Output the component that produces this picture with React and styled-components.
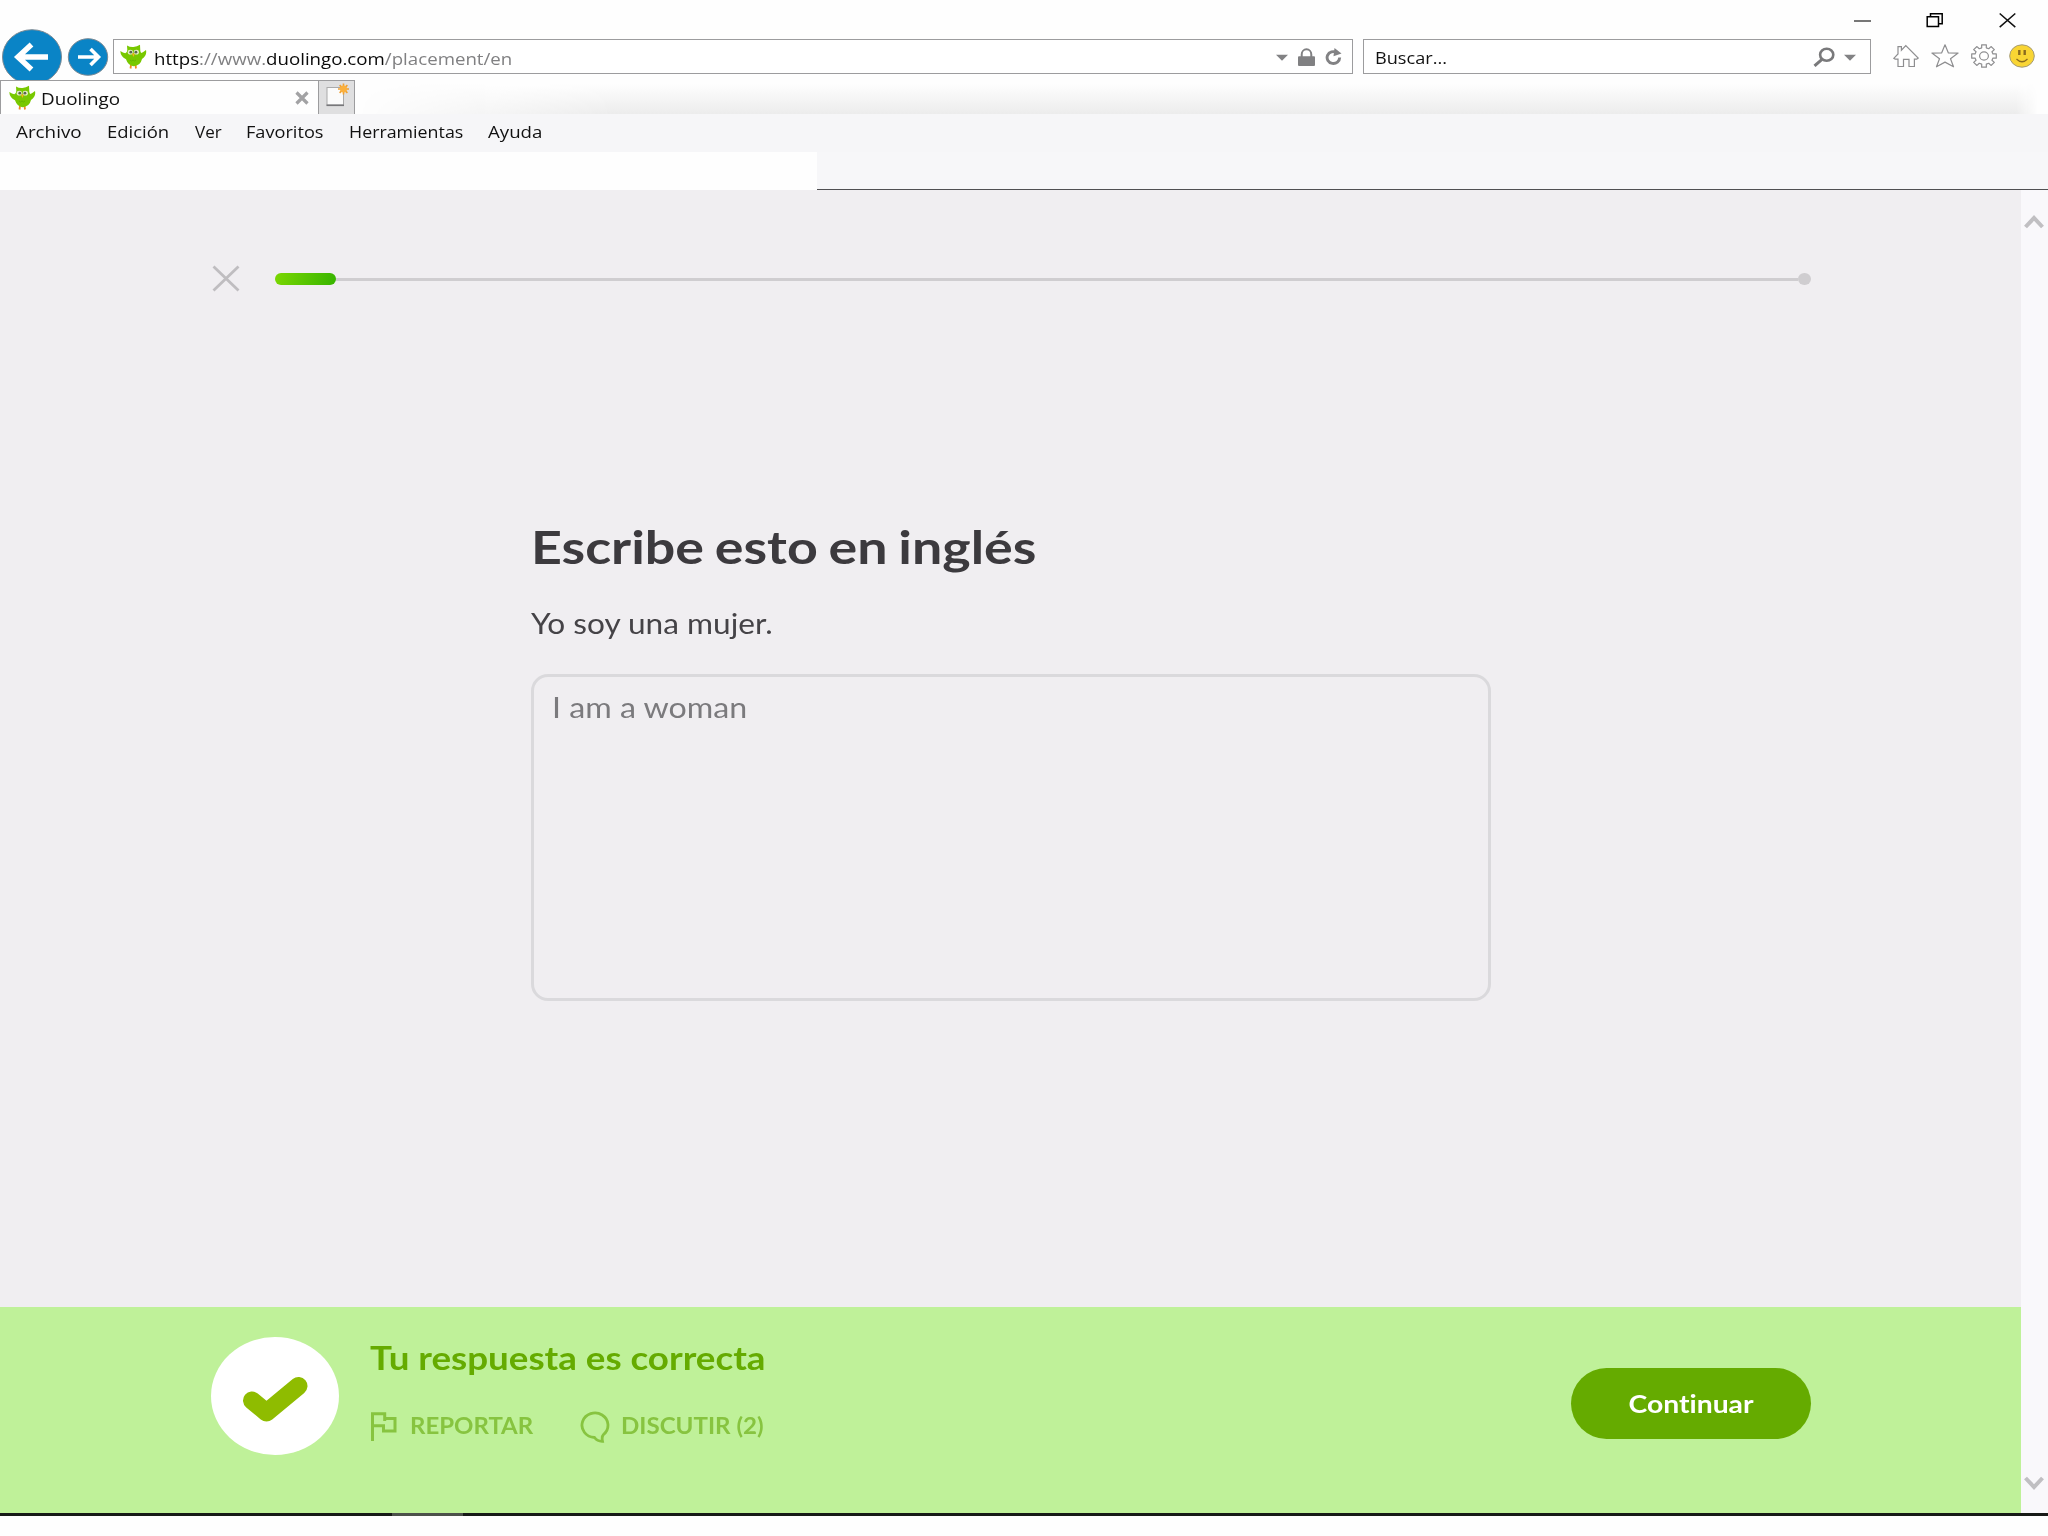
import React from "react";
import styled, { createGlobalStyle } from "styled-components";

const GlobalStyle = createGlobalStyle`
  * { box-sizing: border-box; }
  body { margin: 0; background: #fefefe; overflow: hidden; }
  svg { display: block; flex: none; }
`;

const Screen = styled.div`
  display: flex;
  flex-direction: column;
  width: 2048px;
  height: 1536px;
  background: #fefefe;
  font-family: "Open Sans", "Noto Sans", sans-serif;
  font-size: 16.5px;
  font-variant-ligatures: none;
  color: #111;
`;

/* Text widened horizontally by a ratio, anchored on its left edge. */
const Wide = styled.span`
  display: inline-block;
  white-space: pre;
  transform: scaleX(${(p) => p.$x});
  transform-origin: ${(p) => p.$origin || "left"} center;
`;

/* ---------- Browser chrome ---------- */
const TitleBar = styled.div`
  display: flex;
  justify-content: flex-end;
  align-items: flex-start;
  gap: 55px;
  height: 29px;
  padding: 12px 32px 0 0;
`;

const NavRow = styled.div`
  display: flex;
  align-items: flex-start;
  height: 51px;
  padding-left: 1px;
`;

const NavButton = styled.button`
  border: 0;
  padding: 0;
  background: none;
  margin-right: ${(p) => p.$gap}px;
`;

const Field = styled.div`
  display: flex;
  align-items: center;
  width: ${(p) => p.$width}px;
  height: 35px;
  margin: 10.4px 10px 0 0;
  padding: 1px 9px 0 ${(p) => p.$pad}px;
  border: 1.4px solid #9c9c9e;
  background: #fff;
`;

const Url = styled(Wide)`
  margin-left: 7px;
  padding-top: 2px;
  color: #808082;
  b { font-weight: 400; color: #0a0a0a; }
`;

const SearchHint = styled(Wide)`
  padding-top: 1px;
`;

const FieldIcons = styled.div`
  display: flex;
  align-items: center;
  gap: ${(p) => p.$gap}px;
  margin-left: auto;
  margin-right: ${(p) => p.$end || 0}px;
`;

const Commands = styled.div`
  display: flex;
  gap: 12px;
  padding: 15px 0 0 12px;
`;

const TabRow = styled.div`
  display: flex;
  height: 34px;
`;

const Tab = styled.div`
  display: flex;
  align-items: center;
  width: 318px;
  padding: 0 9px 0 7px;
  border: 1.4px solid #9c9c9e;
  border-bottom: 0;
  border-right: 0;
  background: #fefefe;
`;

const TabTitle = styled(Wide)`
  margin-left: 5px;
  padding-top: 2px;
`;

const TabClose = styled.button`
  margin-left: auto;
  padding: 0;
  border: 0;
  background: none;
`;

const NewTab = styled.button`
  width: 37px;
  padding: 0 0 3px 7px;
  border: 1.4px solid #9c9c9e;
  border-bottom: 0;
  background: #dfdfe0;
`;

const TabShade = styled.div`
  flex: 1;
  margin: 4px 10px 0 0;
  background: linear-gradient(#fefefe, #ececec);
  mask-image: linear-gradient(90deg, transparent, #000 260px, #000 calc(100% - 22px), transparent);
`;

const MenuBar = styled.nav`
  display: grid;
  grid-template-columns: 91.5px 87.5px 51.5px 102.5px 139px 60px;
  align-items: center;
  height: 38px;
  padding: 0 0 4px 15.5px;
  background: #f6f6f8;
`;

const ToolStrip = styled.div`
  display: flex;
  height: 38px;
`;

const ToolBlank = styled.div`
  width: 817px;
`;

const ToolRest = styled.div`
  flex: 1;
  background: #f7f7f9;
  border-bottom: 1.6px solid #505052;
`;

/* ---------- Page ---------- */
const Viewport = styled.div`
  display: flex;
  height: 1323px;
  font-family: Lato, "Open Sans", sans-serif;
`;

const Page = styled.main`
  display: flex;
  flex-direction: column;
  width: 2021px;
  background: #f0eef1;
`;

const ScrollBar = styled.div`
  display: flex;
  flex-direction: column;
  justify-content: space-between;
  align-items: center;
  width: 27px;
  padding: 25px 1px 23px 0;
  background: #f9f8fb;
`;

const ProgressRow = styled.div`
  display: flex;
  align-items: center;
  height: 28px;
  margin: 75px 210px 0 212px;
`;

const CloseCross = styled.svg`
  margin-bottom: 2px;
`;

const Track = styled.div`
  display: flex;
  align-items: center;
  flex: 1;
  margin-left: 35px;
`;

const Fill = styled.div`
  width: 61px;
  height: 12px;
  border-radius: 6px;
  background: linear-gradient(105deg, #7bd702, #37b400);
`;

const Rail = styled.div`
  flex: 1;
  height: 3px;
  background: #cfcdd0;
`;

const EndDot = styled.div`
  width: 13px;
  height: 12.5px;
  border-radius: 50%;
  background: #cfcdd0;
`;

const Exercise = styled.section`
  display: flex;
  flex-direction: column;
  width: 960px;
  margin: 231px 0 0 531px;
`;

const Heading = styled.h1`
  margin: 0 0 35px;
  font-size: 46px;
  line-height: 46px;
  font-weight: 700;
  word-spacing: -2px;
  color: #3c3a3e;
`;

const Prompt = styled.p`
  margin: 0 0 32.6px;
  font-size: 29px;
  line-height: 36px;
  color: #454347;
`;

const Answer = styled.div`
  height: 327px;
  padding: 12px 18px;
  border: 3px solid #dad9dc;
  border-radius: 17px;
  font-size: 29px;
  line-height: 36px;
  color: #7b7a7d;
`;

const ResultBar = styled.footer`
  display: flex;
  height: 206px;
  margin-top: auto;
  padding: 30px 210px 0 211px;
  background: #bff199;
`;

const Badge = styled.div`
  display: flex;
  align-items: center;
  justify-content: center;
  width: 128px;
  height: 118px;
  padding-top: 5px;
  border-radius: 50%;
  background: #fff;
`;

const ResultText = styled.div`
  display: flex;
  flex-direction: column;
  margin-left: 31px;
`;

const ResultTitle = styled.h2`
  margin: 1px 0 0;
  font-size: 32px;
  line-height: 40px;
  font-weight: 700;
  color: #65ab00;
`;

const Actions = styled.div`
  display: grid;
  grid-template-columns: 210px 200px;
  margin-top: 31.5px;
`;

const Action = styled.a`
  display: flex;
  align-items: flex-start;
  gap: ${(p) => p.$gap}px;
  font-size: 22px;
  line-height: 31px;
  font-weight: 700;
  color: #87c440;
`;

const Continue = styled.button`
  display: flex;
  align-items: center;
  justify-content: center;
  width: 240px;
  height: 71px;
  margin: 31px 0 0 auto;
  padding: 0;
  border: 0;
  border-radius: 36px;
  background: #65ab00;
  font: 700 24px/30px Lato, sans-serif;
  font-variant-ligatures: none;
  color: #fff;
`;

const TaskEdge = styled.div`
  display: flex;
  height: 3px;
  background: #171a17;
`;

const TaskActive = styled.div`
  width: 71px;
  margin-left: 392px;
  background: #4c514a;
`;

/* ---------- Drawings ---------- */
const Owl = () => (
  <svg width="28" height="26" viewBox="0 0 28 26">
    <path d="M12 21l-.5 3.500M16.500 21l.5 3.500" stroke="#f08a1c" strokeWidth="1.800" />
    <path d="M8 1.500q3 1.800 6.500 1.500q3.500-.3 6.500-2.300l.3 6q.2 2 1.200 2.300q2-.8 4.500-3q1.200 5.500-4 9q-1.500 6.700-8.500 7.300q-5.500-.8-7.500-7q-5.500-3-5.700-8.300q2.800 1.800 5 2.300q2-1 2-3.300z" fill="#78c800" />
    <ellipse cx="11.300" cy="8.200" rx="2.600" ry="2.400" fill="#e4efc6" />
    <ellipse cx="17.300" cy="8.200" rx="2.600" ry="2.400" fill="#e4efc6" />
    <circle cx="11.800" cy="8.200" r="1.400" fill="#5b6650" />
    <circle cx="16.900" cy="8.200" r="1.400" fill="#5b6650" />
    <path d="M12.900 9.500h3l-1.500 3.500z" fill="#f6b21c" />
    <path d="M11 16l1.500 1 1.500-1 1.500 1 1.500-1" fill="none" stroke="#66b500" />
  </svg>
);

const Back = () => (
  <svg width="62" height="51" viewBox="0 0 62 51">
    <ellipse cx="31" cy="28" rx="29.500" ry="27.300" fill="#0a84c6" stroke="#7c8a94" />
    <path d="M47 28H18M30.500 15.500L17 28l13.500 12.500" fill="none" stroke="#fff" strokeWidth="5.500" />
  </svg>
);

const Forward = () => (
  <svg width="42" height="51" viewBox="0 0 42 51">
    <ellipse cx="21" cy="28" rx="19.700" ry="18.300" fill="#0a84c6" stroke="#7c8a94" />
    <path d="M11 28h19M23.500 20l8 8-8 8" fill="none" stroke="#fff" strokeWidth="3.600" />
  </svg>
);

const Caret = () => (
  <svg width="12" height="7" viewBox="0 0 12 7"><path d="M0 .8h12L6 6.800z" fill="#828284" /></svg>
);

const Lock = () => (
  <svg width="17" height="19" viewBox="0 0 17 19">
    <path d="M3.700 9V6.500a4.800 5.200 0 0 1 9.600 0V9" fill="none" stroke="#808082" strokeWidth="2" />
    <rect x="0" y="8.300" width="17" height="9.700" rx="1" fill="#808082" />
  </svg>
);

const Refresh = () => (
  <svg width="18" height="19" viewBox="0 0 18 19">
    <path d="M11.800 4.600A6.300 5.900 0 1 0 14.700 9.500" fill="none" stroke="#828284" strokeWidth="2.900" />
    <path d="M9.500 0L16.500 5.500 8.500 8.300z" fill="#828284" />
  </svg>
);

const Search = () => (
  <svg width="22" height="20" viewBox="0 0 22 20">
    <ellipse cx="13.700" cy="7.800" rx="6.600" ry="6" fill="none" stroke="#79797b" strokeWidth="2.600" />
    <path d="M9 12.300L1.500 18.900" stroke="#79797b" strokeWidth="3" />
  </svg>
);

const House = () => (
  <svg width="26" height="25" viewBox="0 0 26 25">
    <path d="M.8 14.300L5 9.900V2.700h3.400v3.500L12.800 1.500 25.200 14l-1.500 1.200h-2.300v7.300H16v-7.200h-5.500v7.200H5v-7.300H2.200z" fill="#fff" stroke="#8e8e90" strokeWidth="1.200" />
  </svg>
);

const Star = () => (
  <svg width="28" height="25" viewBox="0 0 28 25">
    <path d="M14 .8l3.400 8.100 9.700.2-7.600 5.700 3 8-8.500-4.700-8.500 4.700 3-8L.9 9.100l9.700-.2z" fill="#fff" stroke="#8e8e90" strokeWidth="1.200" strokeLinejoin="round" />
  </svg>
);

const gearPoints = () => {
  const pts = [];
  for (let i = 0; i < 8; i += 1) {
    [[-0.25, 0.74], [-0.19, 1], [0.19, 1], [0.25, 0.74]].forEach(([d, r]) => {
      const a = (i * Math.PI) / 4 + d;
      pts.push(`${(13 + Math.cos(a) * 12.5 * r).toFixed(2)},${(12 + Math.sin(a) * 11.4 * r).toFixed(2)}`);
    });
  }
  return pts.join(" ");
};

const Gear = () => (
  <svg width="26" height="25" viewBox="0 0 26 25">
    <polygon points={gearPoints()} fill="#fff" stroke="#8e8e90" strokeWidth="1.200" strokeLinejoin="round" />
    <ellipse cx="13" cy="12" rx="4.400" ry="4.100" fill="#fff" stroke="#8e8e90" strokeWidth="1.200" />
  </svg>
);

const Smiley = () => (
  <svg width="26" height="25" viewBox="0 0 26 25">
    <ellipse cx="13" cy="12" rx="12.300" ry="11.200" fill="#f9d534" stroke="#a39a78" />
    <path d="M10.300 6v5M15.700 6v5" stroke="#8a6b1e" strokeWidth="2.400" />
    <path d="M7.500 15q5.500 5.500 11 0" fill="none" stroke="#8a6b1e" strokeWidth="1.300" />
  </svg>
);

const PagePlus = () => (
  <svg width="25" height="26" viewBox="0 0 25 26">
    <rect x="1" y="4.500" width="16.500" height="17.500" fill="#fbfbfb" stroke="#aaa" />
    <path d="M.5 22.300h17.500" stroke="#77777a" strokeWidth="1.600" />
    <path d="M17.500.5v11M12 6h11M13.600 2.100l7.800 7.800M21.400 2.100l-7.800 7.800" stroke="#f0a030" strokeWidth="1.600" />
    <circle cx="17.500" cy="6" r="3.500" fill="#fbb03c" />
  </svg>
);

const menu = [
  ["Archivo", 1.14], ["Edición", 1.12], ["Ver", 1.03],
  ["Favoritos", 1.1], ["Herramientas", 1.08], ["Ayuda", 1.13],
];

export default function App() {
  return (
    <Screen>
      <GlobalStyle />
      <TitleBar>
        <svg width="17" height="16" viewBox="0 0 17 16"><path d="M0 9h17" stroke="#555" strokeWidth="1.600" /></svg>
        <svg width="18" height="16" viewBox="0 0 18 16">
          <path d="M4.500 4V1.800h11.700v10H13M1.200 4.700h11.300v9.700H1.200z" fill="none" stroke="#000" strokeWidth="1.500" />
        </svg>
        <svg width="17" height="16" viewBox="0 0 17 16"><path d="M.7 1.500l15.600 13.600M16.300 1.500L.7 15.100" stroke="#111" strokeWidth="1.500" /></svg>
      </TitleBar>

      <NavRow>
        <NavButton $gap={4}><Back /></NavButton>
        <NavButton $gap={4}><Forward /></NavButton>
        <Field $width={1240} $pad={5}>
          <Owl />
          <Url $x={1.132}><b>https</b>://www.<b>duolingo.com</b>/placement/en</Url>
          <FieldIcons $gap={10}><Caret /><Lock /><Refresh /></FieldIcons>
        </Field>
        <Field $width={508} $pad={11}>
          <SearchHint $x={1.1}>Buscar...</SearchHint>
          <FieldIcons $gap={9} $end={5}><Search /><Caret /></FieldIcons>
        </Field>
        <Commands><House /><Star /><Gear /><Smiley /></Commands>
      </NavRow>

      <TabRow>
        <Tab>
          <Owl />
          <TabTitle $x={1.14}>Duolingo</TabTitle>
          <TabClose>
            <svg width="14" height="14" viewBox="0 0 14 14"><path d="M1.500 1.500l11 11M12.500 1.500l-11 11" stroke="#a2a2a4" strokeWidth="3.200" /></svg>
          </TabClose>
        </Tab>
        <NewTab><PagePlus /></NewTab>
        <TabShade />
      </TabRow>

      <MenuBar>
        {menu.map(([label, x]) => <Wide key={label} $x={x}>{label}</Wide>)}
      </MenuBar>
      <ToolStrip><ToolBlank /><ToolRest /></ToolStrip>

      <Viewport>
        <Page>
          <ProgressRow>
            <CloseCross width="28" height="27" viewBox="0 0 28 27"><path d="M1.500 1.500l25 24M26.500 1.500l-25 24" stroke="#bfbdc0" strokeWidth="2.800" /></CloseCross>
            <Track><Fill /><Rail /><EndDot /></Track>
          </ProgressRow>

          <Exercise>
            <Heading><Wide $x={1.169}>Escribe esto en inglés</Wide></Heading>
            <Prompt><Wide $x={1.09}>Yo soy una mujer.</Wide></Prompt>
            <Answer><Wide $x={1.11}>I am a woman</Wide></Answer>
          </Exercise>

          <ResultBar>
            <Badge>
              <svg width="67" height="46" viewBox="0 0 67 46">
                <path d="M10 24.500L24.500 36.500 56.500 10" fill="none" stroke="#8fbc00" strokeWidth="18" strokeLinecap="round" strokeLinejoin="round" />
              </svg>
            </Badge>
            <ResultText>
              <ResultTitle><Wide $x={1.148}>Tu respuesta es correcta</Wide></ResultTitle>
              <Actions>
                <Action $gap={12.500}>
                  <svg width="27" height="32" viewBox="0 0 27 32">
                    <path d="M2.500 31V3.800h12.200v4.700h10.300v12.500H13.500v-5.300H2.500M14.700 8.500v2.500" fill="none" stroke="#87c440" strokeWidth="3" />
                  </svg>
                  <Wide $x={1.09}>REPORTAR</Wide>
                </Action>
                <Action $gap={10.500}>
                  <svg width="30" height="33" viewBox="0 0 30 33">
                    <path d="M14.500 27.500A13 12.300 0 1 1 23.500 24.500Q21.500 26.500 22.500 31.300Q17.500 31.500 14.500 27.500z" fill="none" stroke="#87c440" strokeWidth="2.800" />
                  </svg>
                  <Wide $x={1.095}>DISCUTIR (2)</Wide>
                </Action>
              </Actions>
            </ResultText>
            <Continue><Wide $x={1.18} $origin="center">Continuar</Wide></Continue>
          </ResultBar>
        </Page>
        <ScrollBar>
          <svg width="20" height="14" viewBox="0 0 20 14"><path d="M1.500 12L10 3l8.500 9" fill="none" stroke="#c0bfc2" strokeWidth="4" /></svg>
          <svg width="20" height="14" viewBox="0 0 20 14"><path d="M1.500 2L10 11l8.500-9" fill="none" stroke="#c0bfc2" strokeWidth="4" /></svg>
        </ScrollBar>
      </Viewport>
      <TaskEdge><TaskActive /></TaskEdge>
    </Screen>
  );
}
